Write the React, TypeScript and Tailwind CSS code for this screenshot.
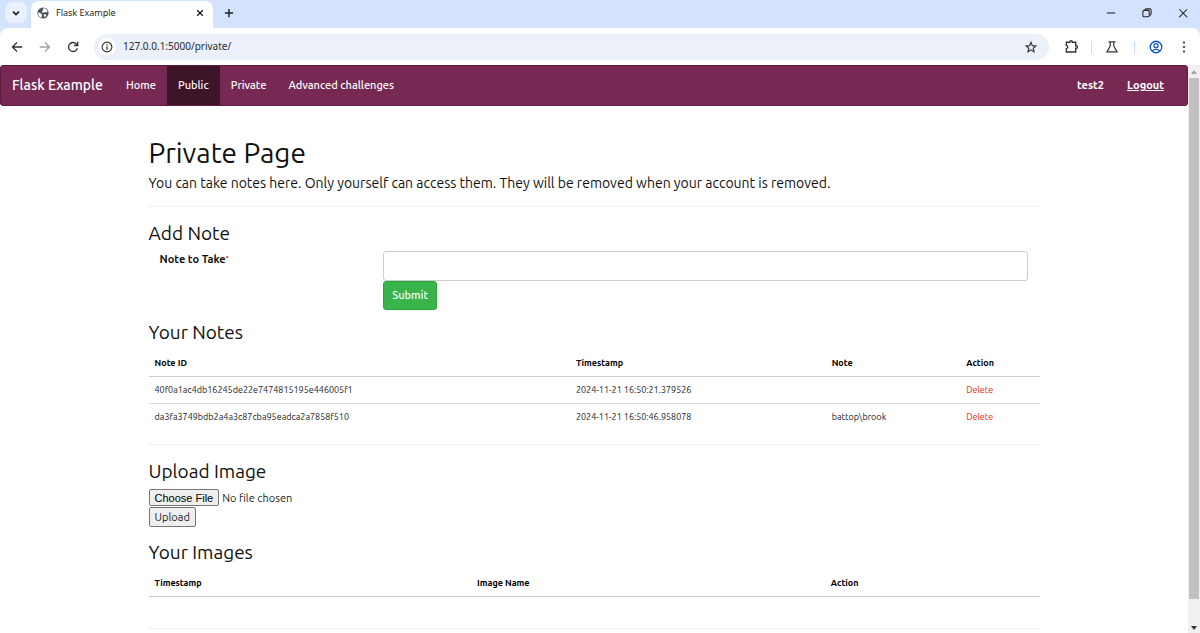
import type { ReactNode } from "react";

interface Note {
  id: string;
  timestamp: string;
  note: string;
}

const notes: Note[] = [
  {
    id: "40f0a1ac4db16245de22e7474815195e446005f1",
    timestamp: "2024-11-21 16:50:21.379526",
    note: "",
  },
  {
    id: "da3fa3749bdb2a4a3c87cba95eadca2a7858f510",
    timestamp: "2024-11-21 16:50:46.958078",
    note: "battop\\brook",
  },
];

const navItems = [
  { label: "Home", active: false },
  { label: "Public", active: true },
  { label: "Private", active: false },
  { label: "Advanced challenges", active: false },
];

interface IconProps {
  className: string;
  children: ReactNode;
}

function Icon({ className, children }: IconProps) {
  return (
    <svg
      viewBox="0 0 16 16"
      fill="none"
      stroke="currentColor"
      strokeWidth="1.5"
      className={`shrink-0 ${className}`}
      aria-hidden="true"
    >
      {children}
    </svg>
  );
}

function TabStrip() {
  return (
    <div className="flex h-7 shrink-0 items-stretch bg-[#d3e3fd] text-[#1f1f1f]">
      <div className="flex w-[31px] items-center pb-[3px] pl-[5px]">
        <button
          aria-label="Search tabs"
          className="flex h-[21px] w-[22px] items-center justify-center rounded-lg bg-[#e9f1fe]"
        >
          <Icon className="h-4 w-4">
            <path d="M5 6.6l3 3 3-3" strokeWidth="1.7" />
          </Icon>
        </button>
      </div>
      <div className="mt-px flex w-[182px] items-center rounded-t-lg bg-white pr-[5px] pb-[3px] pl-[6px]">
        <svg viewBox="0 0 12 12" className="h-3 w-3 shrink-0" aria-hidden="true">
          <circle cx="6" cy="6" r="5.6" fill="#50545a" />
          <path
            d="M1.2 5.2l2.9 1.5c.8.4 1 1 .8 1.7l-.4 1.2.3 1.3C2.4 10.4.9 8.4 1.2 5.2z"
            fill="#fff"
          />
          <path
            d="M6.2 1.2l1.9.2 1.8 1.5.8 1.7-1.3.7-1.7-.3-1 .8-1.5-.4-.2-1.3 1.3-.6-.5-1.2z"
            fill="#fff"
          />
          <path d="M7 7.3l1.9.1.5 1.1-1.5 1.5-1-.7z" fill="#fff" />
        </svg>
        <span className="ml-[7px] flex-1 font-['Noto_Sans',sans-serif] text-[9px]">
          Flask Example
        </span>
        <button aria-label="Close tab" className="flex h-4 w-4 items-center justify-center">
          <Icon className="h-[10px] w-[10px]">
            <path d="M3.5 3.5l9 9M12.5 3.5l-9 9" strokeWidth="2.2" />
          </Icon>
        </button>
      </div>
      <button aria-label="New tab" className="ml-2 flex w-4 items-center justify-center pb-[3px]">
        <Icon className="h-3 w-3">
          <path d="M8 2.5v11M2.5 8h11" strokeWidth="1.9" />
        </Icon>
      </button>
      <div className="ml-auto flex items-center gap-6 pr-[11px] pb-[3px] text-[#222]">
        <button aria-label="Minimize">
          <Icon className="h-3 w-3">
            <path d="M2.5 8h11" strokeWidth="1.4" />
          </Icon>
        </button>
        <button aria-label="Restore">
          <Icon className="h-3 w-3">
            <rect x="2.5" y="4.5" width="8.5" height="8.5" rx="1.5" strokeWidth="1.4" />
            <path d="M5 4.5c0-1.3.7-2 2-2h4.5a2 2 0 012 2V9c0 1.3-.7 2-2 2" strokeWidth="1.4" />
          </Icon>
        </button>
        <button aria-label="Close window">
          <Icon className="h-3 w-3">
            <path d="M3 3l10.5 10.5M13.5 3L3 13.5" strokeWidth="1.4" />
          </Icon>
        </button>
      </div>
    </div>
  );
}

function Toolbar() {
  return (
    <div className="shrink-0 bg-[#d3e3fd]">
      <div className="flex h-[37px] items-center rounded-t-lg bg-white px-[10px] text-[#333]">
        <button aria-label="Back">
          <Icon className="h-[14px] w-[14px]">
            <path d="M14 8H3M8 2.8L2.8 8 8 13.2" />
          </Icon>
        </button>
        <button aria-label="Forward" disabled className="ml-[14px] text-[#a3a3a3]">
          <Icon className="h-[14px] w-[14px]">
            <path d="M2 8h11M8 2.8L13.2 8 8 13.2" />
          </Icon>
        </button>
        <button aria-label="Reload" className="ml-[14px]">
          <Icon className="h-[14px] w-[14px]">
            <path d="M13 9.3A5.1 5.1 0 1111.8 4.5L13.2 6" />
            <path d="M13.4 2v4.3H9.2" />
          </Icon>
        </button>
        <div className="ml-[14px] flex h-[26px] flex-1 items-center rounded-full bg-[#ebf0f9] pr-3 pl-1">
          <button
            aria-label="View site information"
            className="flex h-[18px] w-[18px] items-center justify-center rounded-full bg-white"
          >
            <Icon className="h-3 w-3">
              <circle cx="8" cy="8" r="6.5" />
              <path d="M8 7.3v4.2M8 4.4v1.7" strokeWidth="1.8" />
            </Icon>
          </button>
          <input
            type="text"
            aria-label="Address"
            defaultValue="127.0.0.1:5000/private/"
            className="ml-[7px] min-w-0 flex-1 bg-transparent font-['Noto_Sans',sans-serif] text-[10px] text-[#2a2c30] outline-none"
          />
          <button aria-label="Bookmark this page">
            <Icon className="h-3 w-3">
              <path d="M8 1.7l1.8 4.5 4.7.3-3.6 3.1 1.1 4.7L8 11.8l-4 2.5 1.1-4.7-3.6-3.1 4.7-.3z" />
            </Icon>
          </button>
        </div>
        <button aria-label="Extensions" className="ml-[15px]">
          <Icon className="h-[15px] w-[15px]">
            <path d="M2.5 3.5h3.7V3a1.3 1.3 0 012.6 0v.5h3.7v3.7h.5a1.3 1.3 0 010 2.6h-.5v4h-10v-3.3a1.9 1.9 0 000-3.7z" />
          </Icon>
        </button>
        <span className="ml-3 h-3 w-px bg-[#c9dcfb]" />
        <button aria-label="Labs" className="ml-[13px]">
          <Icon className="h-[14px] w-[14px]">
            <path d="M4 2.2h8M6 2.2v4.6L2.2 13.6h11.6L10 6.8V2.2" strokeWidth="1.4" />
          </Icon>
        </button>
        <span className="ml-[15px] h-3 w-px bg-[#c9dcfb]" />
        <button aria-label="Profile" className="ml-[14px] text-[#0b57d0]">
          <Icon className="h-[14px] w-[14px]">
            <circle cx="8" cy="8" r="6.6" />
            <circle cx="8" cy="6.5" r="2.3" />
            <path d="M3.5 12.6c2.5-2.4 6.5-2.4 9 0" />
          </Icon>
        </button>
        <button aria-label="Menu" className="ml-[15px]">
          <svg viewBox="0 0 12 14" className="h-[14px] w-3" fill="currentColor" aria-hidden="true">
            <circle cx="6" cy="2.5" r="1.1" />
            <circle cx="6" cy="7" r="1.1" />
            <circle cx="6" cy="11.5" r="1.1" />
          </svg>
        </button>
      </div>
    </div>
  );
}

function Navbar() {
  return (
    <nav className="flex h-[41px] items-stretch rounded-[3px] border border-[#5c1d3f] bg-[#772953] text-[11px] font-medium text-white">
      <a href="#" className="flex items-center pr-3 pl-[11px] text-[14px]">
        Flask Example
      </a>
      {navItems.map((item) => (
        <a
          key={item.label}
          href="#"
          className={`flex items-center px-[11px] ${item.active ? "bg-[#3e1429]" : ""}`}
        >
          {item.label}
        </a>
      ))}
      <div className="ml-auto flex items-center gap-[23px] pr-[23px] font-bold">
        <span>test2</span>
        <a href="#" className="underline">
          Logout
        </a>
      </div>
    </nav>
  );
}

function SectionTitle({ children }: { children: ReactNode }) {
  return <h3 className="text-[19px] leading-6">{children}</h3>;
}

function NoteForm() {
  return (
    <form className="mt-[6px] grid grid-cols-4" onSubmit={(e) => e.preventDefault()}>
      <label htmlFor="note" className="flex px-[11px] text-[11px] leading-4 font-semibold">
        Note to Take
        <span className="text-[6px] leading-[13px] text-red-600">*</span>
      </label>
      <div className="col-span-3 px-3">
        <input
          id="note"
          type="text"
          className="block h-[30px] w-full rounded-[3px] border border-[#ccc] px-2 text-[12px]"
        />
        <button
          type="submit"
          className="block h-[29px] rounded-[3px] border border-[#2ca53d] bg-[#38b44a] px-2 text-[11px] font-medium text-white"
        >
          Submit
        </button>
      </div>
    </form>
  );
}

function NotesTable() {
  return (
    <table className="mt-[5px] w-full table-fixed text-left text-[9px] leading-4 text-[#222]">
      <colgroup>
        <col className="w-[47.3%]" />
        <col className="w-[28.7%]" />
        <col className="w-[15.1%]" />
        <col />
      </colgroup>
      <thead className="text-black">
        <tr className="h-[27px] border-b border-[#ccc]">
          <th className="px-[6px] pt-px font-semibold">Note ID</th>
          <th className="px-[6px] pt-px font-semibold">Timestamp</th>
          <th className="px-[6px] pt-px font-semibold">Note</th>
          <th className="px-[6px] pt-px font-semibold">Action</th>
        </tr>
      </thead>
      <tbody>
        {notes.map((n) => (
          <tr key={n.id} className="h-[27px] border-b border-[#ddd] last:border-b-0">
            <td className="px-[6px]">{n.id}</td>
            <td className="px-[6px]">{n.timestamp}</td>
            <td className="px-[6px]">{n.note}</td>
            <td className="px-[6px]">
              <a href="#" className="text-[#dd3311]">
                Delete
              </a>
            </td>
          </tr>
        ))}
      </tbody>
    </table>
  );
}

function UploadForm() {
  return (
    <form className="mt-[6px]" onSubmit={(e) => e.preventDefault()}>
      <input
        type="file"
        aria-label="Image file"
        className="block h-[18px] text-[11px] leading-4 text-[#222] file:mr-[3px] file:h-[17px] file:rounded-[2px] file:border file:border-solid file:border-[#767676] file:bg-[#efefef] file:px-[5px] file:font-['Liberation_Sans',sans-serif] file:text-[11px] file:text-black"
      />
      <button
        type="submit"
        className="block h-5 rounded-[2px] border border-[#767676] bg-[#efefef] px-[5px] text-[11px] text-[#222]"
      >
        Upload
      </button>
    </form>
  );
}

function ImagesTable() {
  return (
    <table className="mt-[5px] w-full table-fixed text-left text-[9px] leading-4">
      <colgroup>
        <col className="w-[36.2%]" />
        <col className="w-[39.7%]" />
        <col />
      </colgroup>
      <thead className="text-black">
        <tr className="h-[27px] border-b border-[#ccc]">
          <th className="px-[6px] pt-px font-semibold">Timestamp</th>
          <th className="px-[6px] pt-px font-semibold">Image Name</th>
          <th className="px-[6px] pt-px font-semibold">Action</th>
        </tr>
      </thead>
    </table>
  );
}

function Scrollbar() {
  return (
    <div className="flex w-3 shrink-0 flex-col items-center bg-[#f1f1f1]">
      <div className="flex h-[13px] items-center">
        <svg viewBox="0 0 6 4" className="h-1 w-[6px]" fill="#a3a3a3" aria-hidden="true">
          <path d="M0 4l3-4 3 4z" />
        </svg>
      </div>
      <div className="w-[10px] flex-1 bg-[#c1c1c1]" />
      <div className="flex h-[34px] items-end pb-[3px]">
        <svg viewBox="0 0 6 4" className="h-1 w-[6px]" fill="#333" aria-hidden="true">
          <path d="M0 0l3 4 3-4z" />
        </svg>
      </div>
    </div>
  );
}

export default function App() {
  return (
    <div className="flex h-screen flex-col overflow-hidden bg-white font-[Ubuntu,'Noto_Sans',sans-serif] text-[#111]">
      <TabStrip />
      <Toolbar />
      <div className="flex min-h-0 flex-1">
        <div className="min-w-0 flex-1 overflow-hidden">
          <Navbar />
          <main className="mx-auto w-3/4 pt-[29px]">
            <h1 className="text-[28px] leading-[36px]">Private Page</h1>
            <p className="mt-[2px] text-[14px] leading-5">
              You can take notes here. Only yourself can access them. They will be removed when
              your account is removed.
            </p>
            <hr className="mt-[13px] mb-[14px] border-[#eee]" />
            <SectionTitle>Add Note</SectionTitle>
            <NoteForm />
            <div className="mt-[10px]">
              <SectionTitle>Your Notes</SectionTitle>
            </div>
            <NotesTable />
            <hr className="mt-[14px] mb-[14px] border-[#eee]" />
            <SectionTitle>Upload Image</SectionTitle>
            <UploadForm />
            <div className="mt-[13px]">
              <SectionTitle>Your Images</SectionTitle>
            </div>
            <ImagesTable />
            <hr className="mt-[31px] border-[#eee]" />
          </main>
        </div>
        <Scrollbar />
      </div>
    </div>
  );
}
